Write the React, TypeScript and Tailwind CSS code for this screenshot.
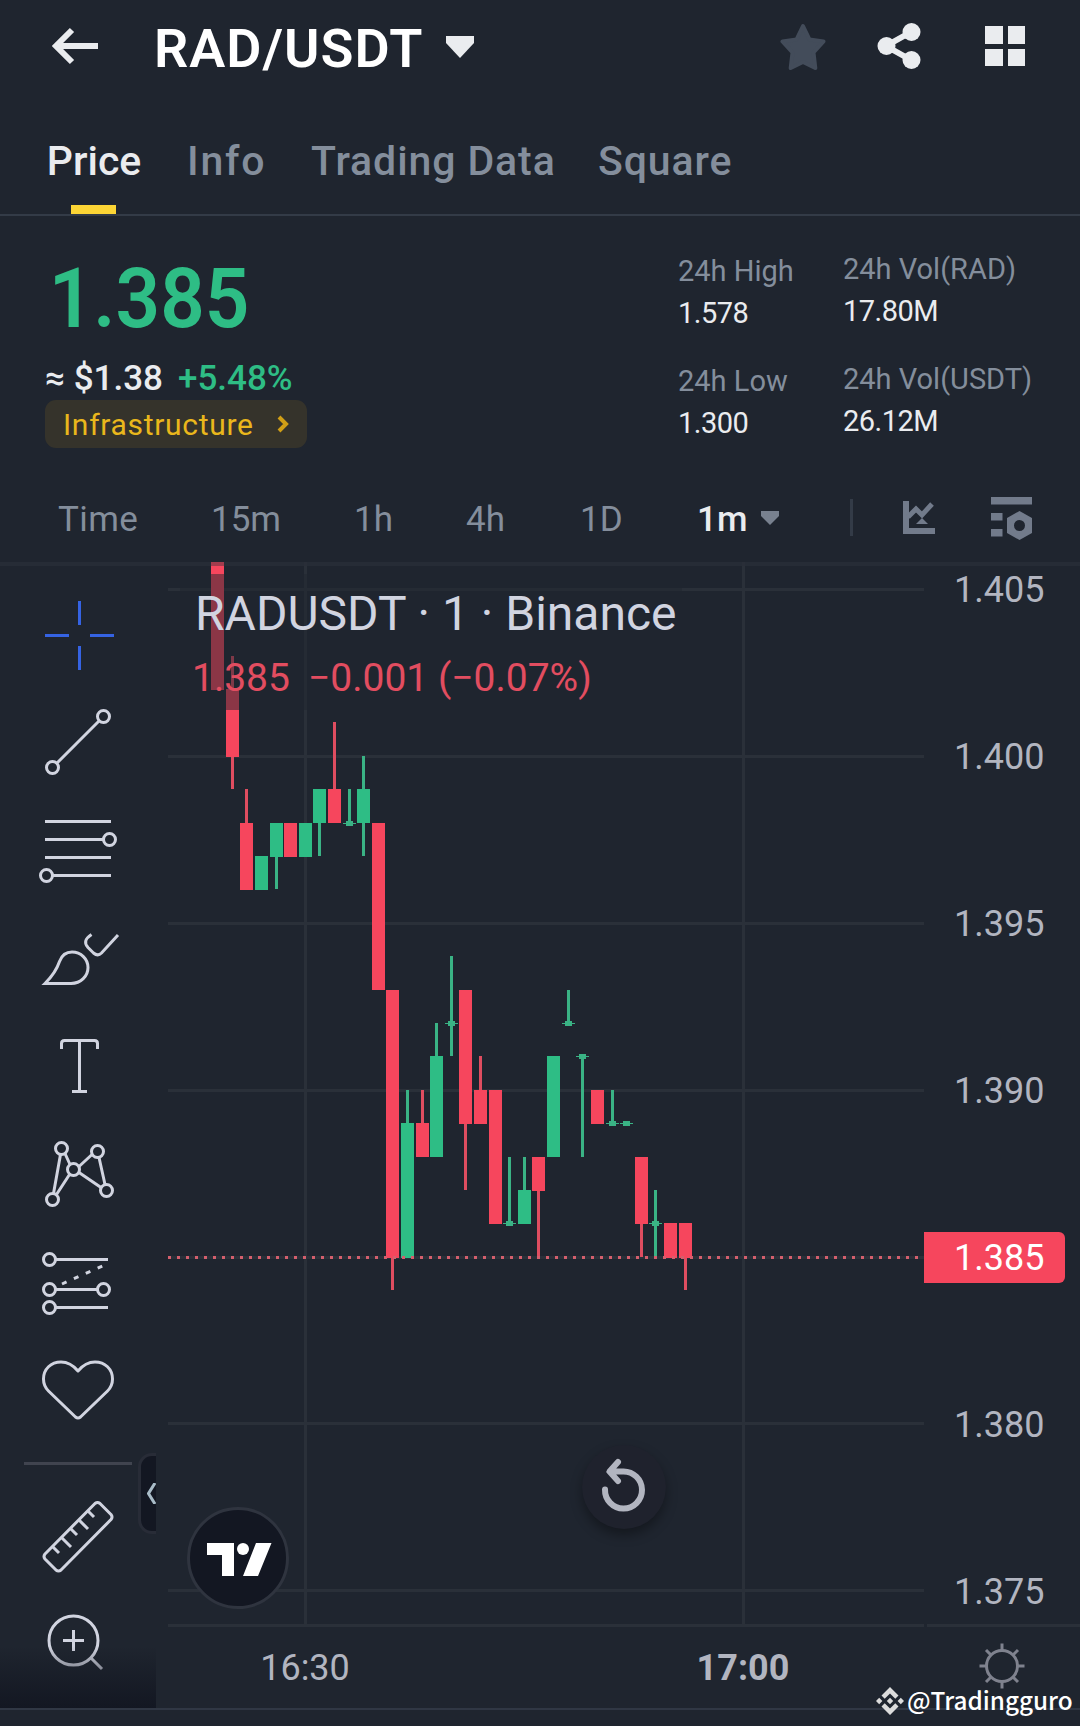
import React from 'react';

const tabs = [
    {name: 'Info', cls: 'ml-[46px] w-[79px] tracking-[1.8px]'},
    {name: 'Trading Data', cls: 'ml-[45px] w-[244px] tracking-[0.9px]'},
    {name: 'Square', cls: 'ml-[43px] w-[136px] tracking-[0.9px]'},
];

const frames = [
    {name: 'Time', cls: 'w-[153px] tracking-[0.4px]'},
    {name: '15m', cls: 'w-[143px]'},
    {name: '1h', cls: 'w-[112px]'},
    {name: '4h', cls: 'w-[114px]'},
    {name: '1D', cls: 'w-[117px]'},
];

const prices = ['1.405', '1.400', '1.395', '1.390', '1.385', '1.380', '1.375'];

// open, high, low, close in thousandths above 1.000, one per minute
const candles = [
    [407, 407, 402, 402],
    [402, 403, 399, 400],
    [398, 399, 396, 396],
    [396, 397, 396, 397],
    [397, 398, 396, 398],
    [398, 398, 397, 397],
    [397, 398, 397, 398],
    [398, 399, 397, 399],
    [399, 401, 398, 398],
    [398, 399, 398, 398],
    [398, 400, 397, 399],
    [398, 398, 393, 393],
    [393, 393, 384, 385],
    [385, 390, 385, 389],
    [389, 390, 388, 388],
    [388, 392, 388, 391],
    [392, 394, 391, 392],
    [393, 393, 387, 389],
    [390, 391, 389, 389],
    [390, 390, 386, 386],
    [386, 388, 386, 386],
    [386, 388, 386, 387],
    [388, 388, 385, 387],
    [388, 391, 388, 391],
    [392, 393, 392, 392],
    [391, 391, 388, 391],
    [390, 390, 389, 389],
    [389, 390, 389, 389],
    [389, 389, 389, 389],
    [388, 388, 385, 386],
    [386, 387, 385, 386],
    [386, 386, 385, 385],
    [386, 386, 384, 385],
];

const yOf = (p: number) => 695.5 - (p - 385) * 33.4;

function Candle({i, data}: {i: number; data: number[]}) {
    const [open, high, low, close] = data;
    const left = Math.round(142.81 + (i - 6) * 14.605);
    const up = close >= open;
    const top = Math.round(yOf(Math.max(open, close)) - 0.8);
    const bottom = Math.round(yOf(Math.min(open, close)) + 0.1);
    const wickTop = Math.round(yOf(high) - 0.8);
    const wickBottom = Math.round(yOf(low) - 0.8);
    const wick = up ? '#3ab385' : '#df4d60';
    return (
        <g>
            <rect x={left + 5} y={wickTop} width={3} height={wickBottom - wickTop} fill={wick}/>
            {open === close ? (
                <g fill={wick}>
                    <rect x={left} y={top} width={13} height={1}/>
                    <rect x={left + 3} y={top - 2} width={7} height={5}/>
                </g>
            ) : (
                <rect x={left} y={top} width={13} height={bottom - top} fill={up ? '#2ebd85' : '#f6465d'}/>
            )}
        </g>
    );
}

function Header() {
    return (
        <div className="flex h-[96px] items-center pl-[52px] pr-[55px]">
            <svg className="w-[48px] h-[40px] -mt-[4px]" viewBox="0 0 48 40" fill="none" stroke="#eaecef" strokeWidth="6">
                <path d="M46 20H5M20 4L4 20l16 16"/>
            </svg>
            <h1 className="ml-[54px] mt-[2px] w-[271px] text-[54px] leading-[60px] tracking-[1px] font-semibold text-white whitespace-nowrap">RAD/USDT</h1>
            <svg className="ml-[21px] w-[28px] h-[22px] -mt-[3px]" viewBox="0 0 28 22" fill="#eaecef">
                <path d="M0 0h28v7L14 22 0 7z"/>
            </svg>
            <svg className="ml-auto w-[46px] h-[48px] -mt-[2px]" viewBox="0 0 46 48" fill="#434c5a" stroke="#434c5a" strokeWidth="4" strokeLinejoin="round">
                <path d="M23 3l6.5 13.500 14 2-10 11 1.800 15.500L23 39l-12.300 6 1.800-15.500-10-11 14-2z"/>
            </svg>
            <svg className="ml-[51px] w-[44px] h-[48px] -mt-[4px]" viewBox="0 0 44 48" fill="#eaecef">
                <path d="M34 10L9 24l25 14" fill="none" stroke="#eaecef" strokeWidth="6"/>
                <circle cx="34.500" cy="10" r="9"/>
                <circle cx="9.500" cy="24" r="9"/>
                <circle cx="34.500" cy="38" r="9"/>
            </svg>
            <div className="ml-[64px] -mt-[4px] grid grid-cols-2 gap-[5px]">
                <span className="size-[17.500px] bg-[#eaecef]"/>
                <span className="size-[17.500px] bg-[#eaecef]"/>
                <span className="size-[17.500px] bg-[#eaecef]"/>
                <span className="size-[17.500px] bg-[#eaecef]"/>
            </div>
        </div>
    );
}

function Stat({label, value}: {label: string; value: string}) {
    return (
        <div className="leading-[42px] whitespace-nowrap text-[29px]">
            <div className="text-[#848e9c]">{label}</div>
            <div className="tracking-[-0.5px] text-[#eaecef]">{value}</div>
        </div>
    );
}

function Summary() {
    return (
        <div className="flex pl-[45px] h-[261px]">
            <div className="w-[633px] pt-[41px]">
                <div className="pl-[4px] w-[300px] origin-left scale-x-[0.93] text-[84px] leading-[84px] font-semibold text-[#2ebd85]">1.385</div>
                <div className="h-[59px] pt-[15px] flex text-[35px] leading-[45px] font-medium whitespace-nowrap">
                    <span className="w-[133px] text-[#eaecef]">≈ $1.38</span>
                    <span className="text-[#2ebd85]">+5.48%</span>
                </div>
                <div className="flex items-center w-[262px] h-[48px] pl-[18px] pr-[18px] rounded-[11px] bg-[#35332b] text-[#eab71c]">
                    <span className="text-[30px] leading-[48px] tracking-[0.7px] pt-[2px]">Infrastructure</span>
                    <svg className="ml-auto w-[12px] h-[18px]" viewBox="0 0 12 18" fill="none" stroke="#d19f16" strokeWidth="4">
                        <path d="M2 2l7 7-7 7"/>
                    </svg>
                </div>
            </div>
            <div className="w-[165px] pt-[34px] flex flex-col gap-[26px]">
                <Stat label="24h High" value="1.578"/>
                <Stat label="24h Low" value="1.300"/>
            </div>
            <div className="pt-[32px] flex flex-col gap-[26px]">
                <Stat label="24h Vol(RAD)" value="17.80M"/>
                <Stat label="24h Vol(USDT)" value="26.12M"/>
            </div>
        </div>
    );
}

function FrameBar() {
    return (
        <div className="flex h-[85px] items-center pt-[2px] pl-[58px] text-[35px] text-[#848e9c]">
            {frames.map((f) => <span key={f.name} className={f.cls}>{f.name}</span>)}
            <span className="w-[64px] font-medium text-[#eaecef]">1m</span>
            <svg className="w-[18px] h-[14px] -mt-[6px]" viewBox="0 0 18 14" fill="#78818f">
                <path d="M0 0h18v5L9 14 0 5z"/>
            </svg>
            <span className="ml-[71px] -mt-[7px] w-[3px] h-[37px] bg-[#333b47]"/>
            <svg className="ml-[50px] -mt-[7px] w-[32px] h-[33px]" viewBox="0 0 32 33" fill="#727b8b">
                <path d="M0 0h6v27h26v6H0z"/>
                <path d="M5 16l8-8 6 6 10-11" fill="none" stroke="#727b8b" strokeWidth="5"/>
                <path d="M19 17l6 6H13z"/>
            </svg>
            <svg className="ml-[56px] -mt-[3px] w-[42px] h-[44px]" viewBox="0 0 42 44" fill="#727b8b">
                <path d="M0 0h41v7.500H0zM0 16h11.500v7.500H0zM0 32h11.500v7.500H0z"/>
                <path fillRule="evenodd" d="M28.500 14L41 21v15l-12.500 7L16 36V21zM28.500 23a5.500 5.500 0 1 0 0 11 5.500 5.500 0 0 0 0-11z"/>
            </svg>
        </div>
    );
}

function ToolIcon({box, cls, children}: {box: string; cls: string; children: React.ReactNode}) {
    return (
        <svg className={`block w-[156px] shrink-0 ${cls}`} viewBox={box} fill="none" stroke="#d1d4e0" strokeWidth="3">
            {children}
        </svg>
    );
}

function Toolbar() {
    return (
        <div className="relative w-[156px] h-[1142px] flex flex-col overflow-hidden">
            <ToolIcon box="0 566 156 124" cls="h-[124px]">
                <path stroke="#3563e3" d="M79.500 601v24M79.500 646v24M45 635.500h24M90 635.500h24"/>
            </ToolIcon>
            <ToolIcon box="0 690 156 106" cls="h-[106px]">
                <circle cx="52.500" cy="767.500" r="6"/>
                <circle cx="103.500" cy="716.500" r="6"/>
                <path d="M57 763l42-42"/>
            </ToolIcon>
            <ToolIcon box="0 796 156 110" cls="h-[110px]">
                <path d="M45 821.500h66M45 839.500h58M45 857.500h66M53 875.500h58"/>
                <circle cx="109.500" cy="839.500" r="6"/>
                <circle cx="46.500" cy="875.500" r="6"/>
            </ToolIcon>
            <ToolIcon box="0 906 156 106" cls="h-[106px]">
                <path d="M45 983.500h26c10 0 17-7.500 17-16s-7-15.500-16-15.500c-6.500 0-10.500 4-12.500 9.500-2 6-8 15.500-14.500 22z"/>
                <path d="M91.500 934.500c-6 4-8 8-3.500 13l5.500 5.500c3 2.500 6 2 8 0L118 935"/>
            </ToolIcon>
            <ToolIcon box="0 1012 156 110" cls="h-[110px]">
                <path d="M61.500 1049v-5.500q0-3 3-3h30q3 0 3 3v5.500M79.500 1040v51M72 1091.500h15"/>
            </ToolIcon>
            <ToolIcon box="0 1122 156 104" cls="h-[104px]">
                <circle cx="61.500" cy="1148.500" r="6"/>
                <circle cx="97.500" cy="1151.500" r="6"/>
                <circle cx="73.500" cy="1169.500" r="6"/>
                <circle cx="52.500" cy="1199.500" r="6"/>
                <circle cx="106.500" cy="1190.500" r="6"/>
                <path d="M60.500 1154.500l-7 39M65 1153.500l5 11M79 1166.500l13-12M99 1157.500l6 27M79 1172.500l22 15M69.500 1174.500l-13 20"/>
            </ToolIcon>
            <ToolIcon box="0 1226 156 106" cls="h-[106px]">
                <path d="M56 1259.500h52M56 1289.500h41M56 1307.500h52"/>
                <path strokeDasharray="5 8" d="M62 1284l43-19"/>
                <circle cx="49.500" cy="1259.500" r="6"/>
                <circle cx="49.500" cy="1289.500" r="6"/>
                <circle cx="49.500" cy="1307.500" r="6"/>
                <circle cx="103.500" cy="1289.500" r="6"/>
            </ToolIcon>
            <ToolIcon box="0 1332 156 130" cls="h-[130px]">
                <path strokeLinejoin="round" d="M78 1371c-5-6-11-9-17-9-10 0-17.500 7-17.500 17 0 5 2 9 5 12l27 26q2.500 2 5 0l27-26c3-3 5-7 5-12 0-10-7.500-17-17.500-17-6 0-12 3-17 9z"/>
            </ToolIcon>
            <hr className="ml-[24px] w-[108px] h-[3px] shrink-0 border-0 bg-[#40444f]"/>
            <ToolIcon box="0 1465 156 126" cls="h-[126px]">
                <path strokeLinejoin="round" d="M95 1503.500q2.500-2 5 0l11 11q2 2.500 0 5l-50 50.500q-2.500 2-5 0l-11-11q-2-2.500 0-5z"/>
                <path d="M53 1547l6 6M62 1538l9 9M71 1529l6 6M79 1520l9 9M88 1511l6 6"/>
            </ToolIcon>
            <ToolIcon box="0 1591 156 117" cls="h-[117px]">
                <circle cx="73.500" cy="1640.500" r="24.500"/>
                <path d="M63 1640.500h21M73.500 1630v21M91 1658l11 11"/>
            </ToolIcon>
            <div className="absolute bottom-0 left-0 w-full h-[62px] bg-linear-to-b from-[#131722]/0 to-[#131722]"/>
            <div className="absolute left-[138px] top-[887px] w-[40px] h-[81px] rounded-[14px] border-[3px] border-[#282c37] bg-[#131722]">
                <svg className="ml-[6px] mt-[27px] w-[9px] h-[21px]" viewBox="0 0 9 21" fill="none" stroke="#a9bcc8" strokeWidth="3">
                    <path d="M8 0L1.500 10.500 8 21"/>
                </svg>
            </div>
        </div>
    );
}

function Chart() {
    return (
        <div className="relative w-[768px] h-[1062px] -mt-[4px]">
            <svg className="block w-[768px] h-[1062px]" viewBox="0 0 768 1062">
                <g fill="#2a3039">
                    {prices.map((p, i) => <rect key={p} x={12} y={26 + i * 167 - (i > 4 ? 1 : 0)} width={756} height={3}/>)}
                    <rect x={148} y={0} width={3} height={1062}/>
                    <rect x={586} y={0} width={3} height={1062}/>
                </g>
                {candles.map((c, i) => <Candle key={i} i={i} data={c}/>)}
                <path d="M12 695.500h756" stroke="#d45f6d" strokeWidth="3" strokeDasharray="3 6"/>
                <rect x={0} y={0} width={768} height={4} fill="#282e38" fillOpacity={0.4}/>
            </svg>
            <div className="absolute left-[24px] top-[12px] w-[502px] h-[68px] bg-[#1f252f]/50"/>
            <div className="absolute left-[24px] top-[80px] w-[412px] h-[68px] bg-[#1f252f]/50"/>
            <div className="absolute left-[39px] top-[22px] text-[48px] leading-[60px] text-[#d1d4e0] whitespace-nowrap">RADUSDT · 1 · Binance</div>
            <div className="absolute left-[36px] top-[93px] flex gap-[18px] text-[39px] leading-[46px] text-[#e24d60] whitespace-nowrap">
                <span>1.385</span>
                <span>−0.001 (−0.07%)</span>
            </div>
            <svg className="absolute left-[31px] top-[945px] w-[102px] h-[102px]" viewBox="0 0 102 102">
                <circle cx="51" cy="51" r="49.500" fill="#131722" stroke="#2f343f" strokeWidth="3"/>
                <path fill="#fff" d="M20 36h27v33H35V48H20zM69 36h15.500L71 69H56z"/>
                <circle cx="56" cy="42" r="6" fill="#fff"/>
            </svg>
            <div className="absolute left-[426px] top-[883px] size-[84px] rounded-full bg-[#1f222d] shadow-[0_6px_12px_rgba(0,0,0,0.35)]">
                <svg className="size-[84px]" viewBox="0 0 84 84" fill="none" stroke="#b2b5c0" strokeWidth="6" strokeLinecap="round" strokeLinejoin="round">
                    <path d="M36 17L27.500 26.500l8.500 9.500M28 26.500h13a18.500 18.500 0 1 1-18 18"/>
                </svg>
            </div>
        </div>
    );
}

function TimeAxis() {
    return (
        <div className="flex h-[84px] text-[36px] text-[#b2b5c0]">
            <div className="flex w-[768px] leading-[82px] text-center bg-[linear-gradient(#2a3039,#2a3039)] bg-[length:756px_3px] bg-no-repeat bg-[position:12px_0px] pt-[3px]">
                <span className="w-[298px]">16:30</span>
                <span className="ml-[140px] w-[298px] font-bold">17:00</span>
            </div>
            <div className="ml-[3px] w-[153px] border-t-[3px] border-[#2a3039]">
                <svg className="ml-[52px] mt-[16px] size-[46px]" viewBox="0 0 46 46" fill="none" stroke="#7f828e" strokeWidth="3">
                    <circle cx="23" cy="23" r="15.500"/>
                    <path d="M23 .5v7M23 38.500v7M.5 23h7M38.500 23h7M7 7l5 5M34 34l5 5M39 7l-5 5M12 34l-5 5"/>
                </svg>
            </div>
        </div>
    );
}

export default function App() {
    return (
        <div className="relative w-[1080px] h-[1726px] overflow-hidden bg-[#1f252f] font-['Roboto',sans-serif]">
            <Header/>
            <div className="flex h-[120px] border-b-2 border-[#333b47] pl-[47px] pt-[35px] text-[41px] leading-[60px] font-medium text-[#848e9c] whitespace-nowrap">
                <div className="flex flex-col items-center w-[94px] text-[#eaecef]">
                    <span>Price</span>
                    <span className="mt-[14px] mr-[1px] w-[45px] h-[9px] shrink-0 bg-[#fcd535]"/>
                </div>
                {tabs.map((t) => <span key={t.name} className={t.cls}>{t.name}</span>)}
            </div>
            <Summary/>
            <FrameBar/>
            <div className="flex border-t-4 border-[#262c36]">
                <Toolbar/>
                <div>
                    <div className="flex">
                        <Chart/>
                        <div className="w-[156px] h-[1058px] -mt-[2px] flex flex-col gap-[116px] text-[36px] leading-[51px] text-[#b2b5c0]">
                            {prices.map((p) => p === '1.385'
                                ? <span key={p} className="w-[141px] h-[51px] pt-px pl-[30px] rounded-r-[6px] bg-[#f6465d] text-white">{p}</span>
                                : <span key={p} className="h-[51px] pt-px pl-[30px]">{p}</span>)}
                        </div>
                    </div>
                    <TimeAxis/>
                </div>
            </div>
            <div className="h-[18px] border-t-2 border-[#303744]"/>
            <div className="absolute left-[876px] top-[1682px] flex items-center">
                <svg className="w-[28px] h-[28px]" viewBox="0 0 28 28" fill="#dcdcdc">
                    <path d="M14 0l8.500 8.500-3.200 3.200L14 6.400l-5.300 5.300-3.200-3.200zM14 28l8.500-8.500-3.200-3.200-5.300 5.300-5.300-5.300-3.200 3.200zM3.200 10.800L6.400 14l-3.200 3.200L0 14zM24.800 10.800L28 14l-3.200 3.200-3.200-3.200zM14 10.800l3.200 3.200-3.200 3.200-3.200-3.200z"/>
                </svg>
                <span className="ml-[3px] -mt-[2px] text-[24.300px] leading-[40px] font-medium text-white font-['Noto_Sans_CJK_SC',sans-serif]">@Tradingguro</span>
            </div>
        </div>
    );
}
